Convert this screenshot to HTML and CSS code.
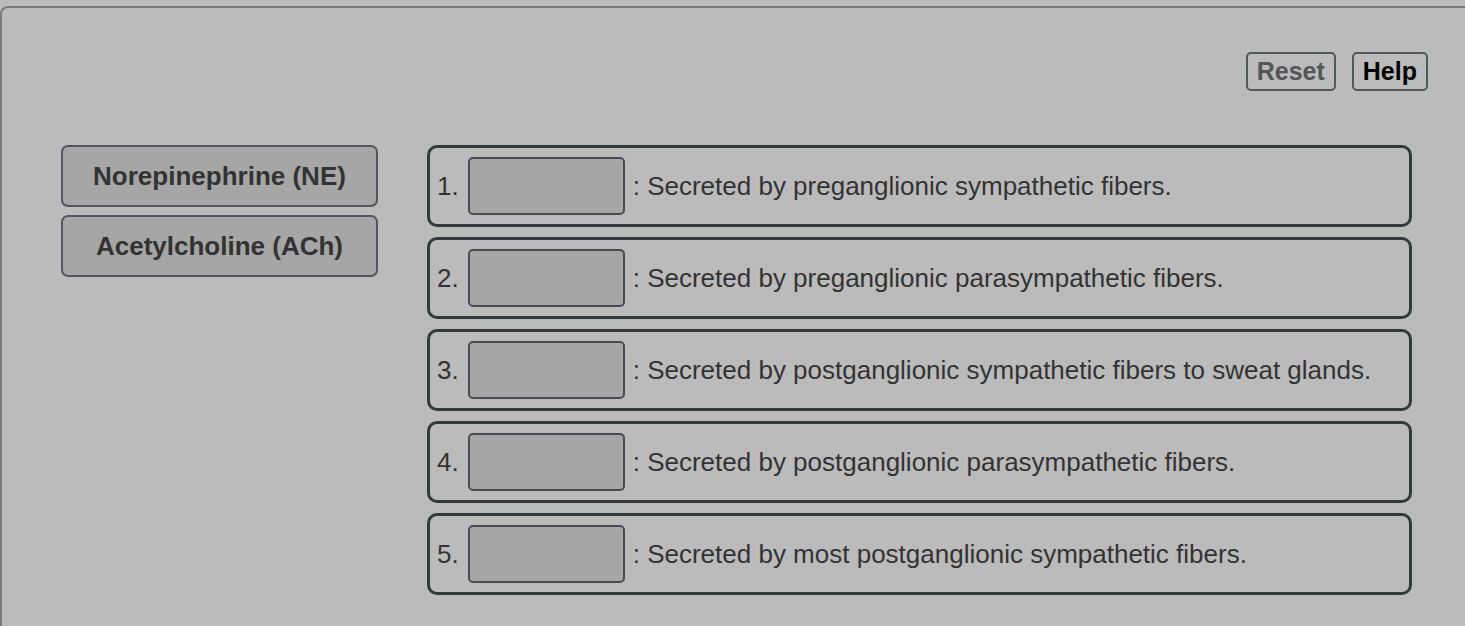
FILE: index.html
```html
<!DOCTYPE html>
<html lang="en">
<head>
  <meta charset="UTF-8">
  <meta name="viewport" content="width=device-width, initial-scale=1.0">
  <title>Neurotransmitters</title>
  <link rel="stylesheet" href="styles.css">
</head>
<body>
  <div class="panel">
    <div class="toolbar">
      <button class="tool-btn reset">Reset</button>
      <button class="tool-btn help">Help</button>
    </div>

    <div class="activity">
      <div class="choices">
        <div class="chip">Norepinephrine (NE)</div>
        <div class="chip">Acetylcholine (ACh)</div>
      </div>

      <div class="rows">
        <div class="row"><span class="num">1.</span><span class="drop"></span><span class="label">: Secreted by preganglionic sympathetic fibers.</span></div>
        <div class="row"><span class="num">2.</span><span class="drop"></span><span class="label">: Secreted by preganglionic parasympathetic fibers.</span></div>
        <div class="row"><span class="num">3.</span><span class="drop"></span><span class="label">: Secreted by postganglionic sympathetic fibers to sweat glands.</span></div>
        <div class="row"><span class="num">4.</span><span class="drop"></span><span class="label">: Secreted by postganglionic parasympathetic fibers.</span></div>
        <div class="row"><span class="num">5.</span><span class="drop"></span><span class="label">: Secreted by most postganglionic sympathetic fibers.</span></div>
      </div>
    </div>
  </div>
</body>
</html>
```

FILE: styles.css
```css
  html, body {
    margin: 0;
    padding: 0;
    overflow: hidden;
    background-color: #bbbbbb;
    font-family: "Liberation Sans", Arial, sans-serif;
    color: #333;
  }
  .panel {
    margin-top: 6px;
    width: 1500px;
    height: 620px;
    border-top: 2px solid #7b7b7b;
    border-left: 2px solid #7b7b7b;
    border-top-left-radius: 8px;
    box-sizing: border-box;
  }
  .toolbar {
    width: 1426px;
    display: flex;
    justify-content: flex-end;
    gap: 16px;
    padding-top: 44px;
  }
  .tool-btn {
    height: 39px;
    padding: 0 9px;
    border: 2px solid #4f5959;
    border-radius: 5px;
    background: transparent;
    font-family: "Liberation Sans", Arial, sans-serif;
    font-size: 25px;
    font-weight: bold;
    line-height: 35px;
  }
  .reset {
    color: #555;
  }
  .help {
    color: #000;
  }
  .activity {
    display: flex;
    align-items: flex-start;
    margin-top: 54px;
    padding-left: 59px;
  }
  .choices {
    display: flex;
    flex-direction: column;
    gap: 8px;
    width: 317px;
  }
  .chip {
    height: 62px;
    box-sizing: border-box;
    border: 2px solid #555560;
    border-radius: 7px;
    background-color: #a6a6a6;
    font-size: 26px;
    font-weight: bold;
    display: flex;
    align-items: center;
    justify-content: center;
  }
  .rows {
    display: flex;
    flex-direction: column;
    gap: 10px;
    margin-left: 49px;
    width: 985px;
  }
  .row {
    height: 82px;
    box-sizing: border-box;
    border: 3px solid #323a3b;
    border-radius: 10px;
    display: flex;
    align-items: center;
    padding-left: 7px;
    font-size: 26px;
  }
  .num {
    margin-right: 9px;
  }
  .drop {
    width: 157px;
    height: 58px;
    box-sizing: border-box;
    border: 2px solid #4a4a55;
    border-radius: 5px;
    background-color: #a6a6a6;
  }
  .label {
    margin-left: 8px;
  }
```
